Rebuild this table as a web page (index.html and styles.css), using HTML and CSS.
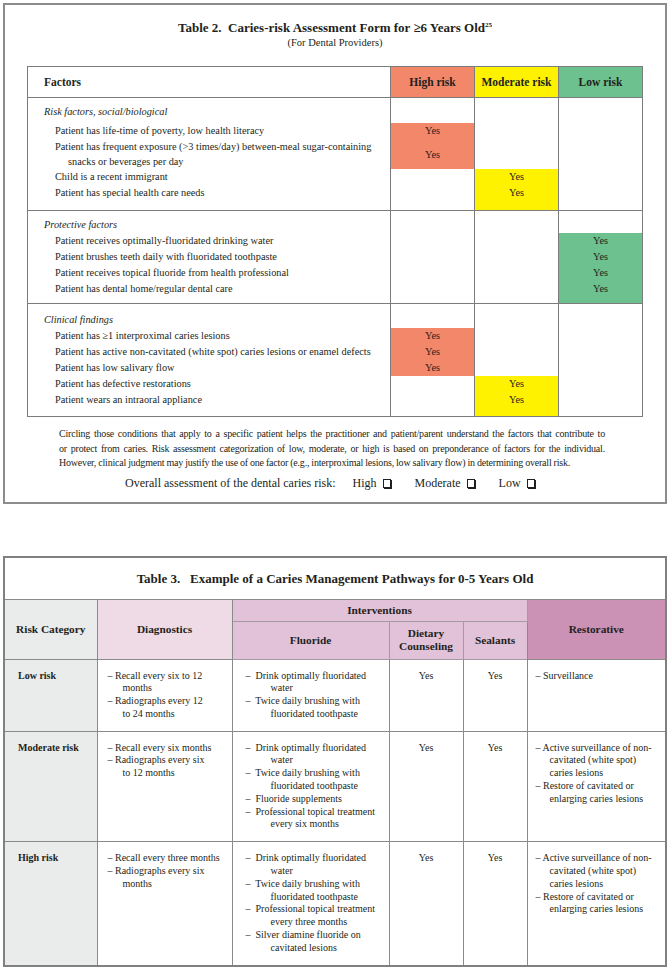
FILE: index.html
```html
<!DOCTYPE html>
<html>
<head>
<meta charset="utf-8">
<link rel="stylesheet" href="styles.css">
</head>
<body>
<section class="panel">
  <h1 class="title">Table 2.&nbsp; Caries-risk Assessment Form for ≥6 Years Old<sup>25</sup></h1>
  <div class="sub">(For Dental Providers)</div>
  <table class="risk">
    <colgroup><col class="c-f"><col class="c-r"><col class="c-r"><col class="c-r"></colgroup>
    <thead>
      <tr><th class="fh">Factors</th><th class="hi">High risk</th><th class="mo">Moderate risk</th><th class="lo">Low risk</th></tr>
    </thead>
    <tbody>
      <tr class="sh s1"><td class="sec">Risk factors, social/biological</td><td></td><td></td><td></td></tr>
      <tr><td class="it">Patient has life-time of poverty, low health literacy</td><td class="hi">Yes</td><td></td><td></td></tr>
      <tr class="two"><td class="it hang">Patient has frequent exposure (&gt;3 times/day) between-meal sugar-containing<br>snacks or beverages per day</td><td class="hi">Yes</td><td></td><td></td></tr>
      <tr><td class="it">Child is a recent immigrant</td><td></td><td class="mo">Yes</td><td></td></tr>
      <tr class="last l1"><td class="it">Patient has special health care needs</td><td></td><td class="mo">Yes</td><td></td></tr>
    </tbody>
    <tbody>
      <tr class="sh s2"><td class="sec">Protective factors</td><td></td><td></td><td></td></tr>
      <tr><td class="it">Patient receives optimally-fluoridated drinking water</td><td></td><td></td><td class="lo">Yes</td></tr>
      <tr><td class="it">Patient brushes teeth daily with fluoridated toothpaste</td><td></td><td></td><td class="lo">Yes</td></tr>
      <tr><td class="it">Patient receives topical fluoride from health professional</td><td></td><td></td><td class="lo">Yes</td></tr>
      <tr class="last l2"><td class="it">Patient has dental home/regular dental care</td><td></td><td></td><td class="lo">Yes</td></tr>
    </tbody>
    <tbody>
      <tr class="sh s3"><td class="sec">Clinical findings</td><td></td><td></td><td></td></tr>
      <tr><td class="it">Patient has ≥1 interproximal caries lesions</td><td class="hi">Yes</td><td></td><td></td></tr>
      <tr><td class="it">Patient has active non-cavitated (white spot) caries lesions or enamel defects</td><td class="hi">Yes</td><td></td><td></td></tr>
      <tr><td class="it">Patient has low salivary flow</td><td class="hi">Yes</td><td></td><td></td></tr>
      <tr><td class="it">Patient has defective restorations</td><td></td><td class="mo">Yes</td><td></td></tr>
      <tr class="last l3"><td class="it">Patient wears an intraoral appliance</td><td></td><td class="mo">Yes</td><td></td></tr>
    </tbody>
  </table>
  <p class="note"><span class="jl">Circling those conditions that apply to a specific patient helps the practitioner and patient/parent understand the factors that contribute to</span><span class="jl">or protect from caries. Risk assessment categorization of low, moderate, or high is based on preponderance of factors for the individual.</span><span class="ll">However, clinical judgment may justify the use of one factor (e.g., interproximal lesions, low salivary flow) in determining overall risk.</span></p>
  <div class="overall">
    <span class="ov-label">Overall assessment of the dental caries risk:</span>
    <span class="opt">High <span class="box"></span></span>
    <span class="opt">Moderate <span class="box"></span></span>
    <span class="opt">Low <span class="box"></span></span>
  </div>
</section>

<table class="path">
  <colgroup>
    <col class="p-rc"><col class="p-dg"><col class="p-fl"><col class="p-dc"><col class="p-se"><col class="p-rs">
  </colgroup>
  <thead>
    <tr class="cap"><th colspan="6">Table 3.&nbsp;&nbsp; Example of a Caries Management Pathways for 0-5 Years Old</th></tr>
    <tr class="h1">
      <th rowspan="2" class="rc">Risk Category</th>
      <th rowspan="2" class="dg">Diagnostics</th>
      <th colspan="3" class="iv">Interventions</th>
      <th rowspan="2" class="rs">Restorative</th>
    </tr>
    <tr class="h2">
      <th class="iv">Fluoride</th>
      <th class="iv">Dietary<br>Counseling</th>
      <th class="iv">Sealants</th>
    </tr>
  </thead>
  <tbody>
    <tr>
      <td class="rc cat">Low risk</td>
      <td class="dgc">
        <div class="li">– Recall every six to 12<br>months</div>
        <div class="li">– Radiographs every 12<br>to 24 months</div>
      </td>
      <td class="flc">
        <div class="li">–&nbsp; Drink optimally fluoridated<br>water</div>
        <div class="li">–&nbsp; Twice daily brushing with<br>fluoridated toothpaste</div>
      </td>
      <td class="yes">Yes</td>
      <td class="yes">Yes</td>
      <td class="rsc"><div class="li">– Surveillance</div></td>
    </tr>
    <tr>
      <td class="rc cat">Moderate risk</td>
      <td class="dgc">
        <div class="li">– Recall every six months</div>
        <div class="li">– Radiographs every six<br>to 12 months</div>
      </td>
      <td class="flc">
        <div class="li">–&nbsp; Drink optimally fluoridated<br>water</div>
        <div class="li">–&nbsp; Twice daily brushing with<br>fluoridated toothpaste</div>
        <div class="li">–&nbsp; Fluoride supplements</div>
        <div class="li">–&nbsp; Professional topical treatment<br>every six months</div>
      </td>
      <td class="yes">Yes</td>
      <td class="yes">Yes</td>
      <td class="rsc">
        <div class="li">– Active surveillance of non-<br>cavitated (white spot)<br>caries lesions</div>
        <div class="li">– Restore of cavitated or<br>enlarging caries lesions</div>
      </td>
    </tr>
    <tr>
      <td class="rc cat">High risk</td>
      <td class="dgc">
        <div class="li">– Recall every three months</div>
        <div class="li">– Radiographs every six<br>months</div>
      </td>
      <td class="flc">
        <div class="li">–&nbsp; Drink optimally fluoridated<br>water</div>
        <div class="li">–&nbsp; Twice daily brushing with<br>fluoridated toothpaste</div>
        <div class="li">–&nbsp; Professional topical treatment<br>every three months</div>
        <div class="li">–&nbsp; Silver diamine fluoride on<br>cavitated lesions</div>
      </td>
      <td class="yes">Yes</td>
      <td class="yes">Yes</td>
      <td class="rsc">
        <div class="li">– Active surveillance of non-<br>cavitated (white spot)<br>caries lesions</div>
        <div class="li">– Restore of cavitated or<br>enlarging caries lesions</div>
      </td>
    </tr>
  </tbody>
</table>
</body>
</html>
```

FILE: styles.css
```css
html, body {
  margin: 0;
  padding: 0;
  background: #ffffff;
}
body {
  padding: 3px 4px 0 3px;
  font-family: "Liberation Serif", "Times New Roman", serif;
  color: #231f20;
}

/* ---------- Table 2 panel ---------- */
.panel {
  border: 2px solid #8c8c8c;
  padding: 15px 0 11px 0;
}
.title {
  margin: 0;
  text-align: center;
  font-size: 13px;
  line-height: 16px;
  font-weight: bold;
}
.title sup {
  font-size: 7px;
  vertical-align: 5px;
  line-height: 0;
}
.sub {
  text-align: center;
  font-size: 10.5px;
  line-height: 14px;
}
.risk {
  margin: 16px 0 0 22px;
  width: 615px;
  border-collapse: collapse;
  table-layout: fixed;
  border: 1px solid #7c7c7c;
  font-size: 10.3px;
}
.c-f { width: 363px; }
.c-r { width: 84px; }
.risk th {
  border: 1px solid #7c7c7c;
  font-size: 11.5px;
  font-weight: bold;
  line-height: 16px;
  padding: 7px 0;
  text-align: center;
}
.risk th.fh {
  text-align: left;
  padding-left: 16px;
}
.risk tbody {
  border-top: 1px solid #7c7c7c;
}
.risk td {
  border-left: 1px solid #7c7c7c;
  border-right: 1px solid #7c7c7c;
  padding: 0;
  line-height: 16px;
  text-align: center;
  vertical-align: middle;
}
.risk td.sec {
  text-align: left;
  font-style: italic;
  padding-left: 16px;
}
.risk tr.s1 td { padding-top: 6px; padding-bottom: 3px; }
.risk tr.s2 td { padding-top: 6px; padding-bottom: 0; }
.risk tr.s3 td { padding-top: 8px; padding-bottom: 0; }
.risk tr.l1 td { padding-bottom: 9px; }
.risk tr.l2 td { padding-bottom: 6px; }
.risk tr.l3 td { padding-bottom: 8px; }
.risk td.it {
  text-align: left;
  padding-left: 27px;
}
.risk tr.two td { line-height: 15px; }
.risk td.hang {
  padding-left: 40px;
  text-indent: -13px;
}
.hi { background: #f3876a; }
.mo { background: #fff200; }
.lo { background: #6cc18e; }

.note {
  margin: 10px 60px 0 54px;
  font-size: 10px;
  letter-spacing: -0.2px;
  word-spacing: -0.2px;
  line-height: 14.5px;
}
.note .jl {
  display: block;
  text-align: justify;
  text-align-last: justify;
}
.note .ll {
  display: block;
  text-align: left;
}
.overall {
  margin: 5px 0 0 120px;
  font-size: 12px;
  line-height: 15px;
  display: flex;
  align-items: center;
}
.ov-label { margin-right: 17px; }
.opt {
  margin-right: 24px;
  display: inline-flex;
  align-items: center;
}
.box {
  display: inline-block;
  width: 6px;
  height: 7px;
  border: 1px solid #231f20;
  box-shadow: 1px 1px 0 #231f20;
  margin-left: 6px;
}

/* ---------- Table 3 ---------- */
.path {
  margin-top: 52px;
  width: 664px;
  border-collapse: collapse;
  table-layout: fixed;
  border: 2px solid #808080;
  font-size: 10px;
}
.p-rc { width: 93px; }
.p-dg { width: 135px; }
.p-fl { width: 157px; }
.p-dc { width: 74px; }
.p-se { width: 64px; }
.p-rs { width: 139px; }
.path th {
  border: 1px solid #8a8a8a;
  font-weight: bold;
  font-size: 11.3px;
  line-height: 13px;
  text-align: center;
  padding: 0;
}
.path tr.cap th {
  height: 41px;
  font-size: 13px;
  border-bottom: 1px solid #8a8a8a;
  background: #fff;
}
.path tr.h1 th { height: 21px; }
.path tr.h2 th { height: 37px; }
.path th.rc { background: #e9ecea; }
.path th.dg { background: #efdbe5; }
.path th.iv { background: #e2c2d8; border-color: #a49aa2; }
.path th.rs { background: #cc92b5; }
.path td {
  border: 1px solid #8a8a8a;
  vertical-align: top;
  line-height: 12.8px;
  padding: 10px 4px 10px 0;
}
.path td.rc {
  background: #e9ecea;
}
.path td.cat {
  font-weight: bold;
  padding-left: 13px;
}
.path td.dgc { padding-left: 10px; }
.path td.flc { padding-left: 13px; }
.path td.rsc { padding-left: 8px; }
.path td.yes { text-align: center; padding-left: 4px; }
.li {
  white-space: nowrap;
}
.dgc .li { padding-left: 15px; text-indent: -15px; }
.flc .li { padding-left: 25px; text-indent: -25px; }
.rsc .li { padding-left: 14px; text-indent: -14px; }
```
